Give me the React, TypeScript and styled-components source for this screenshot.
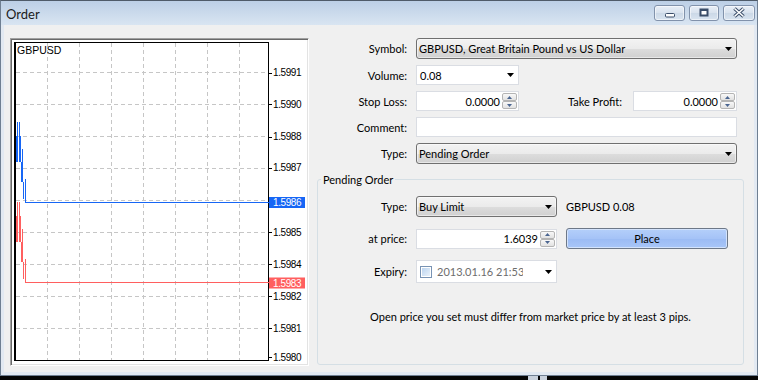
import styled, { createGlobalStyle } from 'styled-components';

const GlobalStyle = createGlobalStyle`
  html, body {
    margin: 0;
    padding: 0;
    background: #000;
  }
  body {
    font-family: Lato, "Liberation Sans", Arial, sans-serif;
    font-size: 11px;
    color: #000;
  }
  * { box-sizing: border-box; }
`;

const Screen = styled.div`
  width: 758px;
  height: 380px;
  background: #050505;
  display: flex;
  flex-direction: column;
  overflow: hidden;
`;

const Window = styled.div`
  height: 376px;
  flex: none;
  background: #e2e9f2;
  border: 1px solid #6f7f92;
  border-top-color: #4f5b69;
  display: flex;
  flex-direction: column;
`;

const TitleBar = styled.div`
  height: 24px;
  flex: none;
  display: flex;
  align-items: flex-start;
  background: linear-gradient(#bccfe6, #d9e5f2);
  padding: 0 2px 0 5px;
`;

const Title = styled.div`
  font-size: 13px;
  line-height: 16px;
  margin-top: 5px;
  color: #1b1b1b;
`;

const Caption = styled.div`
  display: flex;
  gap: 4px;
  margin-left: auto;
  margin-top: 4px;
`;

const CapButton = styled.div<{ $w: number }>`
  width: ${p => p.$w}px;
  height: 16px;
  border: 1px solid #8192ab;
  border-radius: 3px;
  background: linear-gradient(#e9eff7, #d8e2ee 50%, #cbd8e7 51%, #d9e4f0);
  box-shadow: inset 0 0 0 1px rgba(255, 255, 255, 0.55);
  display: flex;
  align-items: center;
  justify-content: center;
`;

const Client = styled.div`
  flex: 1;
  margin: 0 3px 3px;
  background: #f0f0f0;
  display: flex;
  padding: 13px 0 0 6px;
`;

const ChartFrame = styled.div`
  width: 299px;
  height: 328px;
  flex: none;
  border: 1px solid;
  border-color: #a0a0a0 #ffffff #ffffff #a0a0a0;
  box-shadow: inset 1px 1px 0 #696969, inset -1px -1px 0 #e3e3e3;
  background: #fff;
  padding: 1px;
`;

const ChartSvg = styled.svg`
  display: block;
  font-family: "Liberation Sans", Arial, sans-serif;
`;

const Side = styled.div`
  width: 427px;
  margin-left: 8px;
  flex: none;
  display: flex;
  flex-direction: column;
`;

const Form = styled.div`
  display: grid;
  grid-template-columns: 90px 321px;
  column-gap: 9px;
  row-gap: 6px;
  align-items: center;
`;

const Label = styled.label`
  text-align: right;
  white-space: nowrap;
  line-height: 15px;
`;

const Combo = styled.div<{ $w?: number }>`
  height: 21px;
  width: ${p => (p.$w ? `${p.$w}px` : '100%')};
  border: 1px solid #707070;
  border-radius: 3px;
  background: linear-gradient(#f3f3f3 0%, #ebebeb 50%, #dddddd 51%, #d0d0d0 100%);
  box-shadow: inset 0 0 0 1px rgba(255, 255, 255, 0.5);
  display: flex;
  align-items: center;
  padding: 0 4px 0 2px;
  white-space: nowrap;
`;

const Edit = styled.div<{ $w?: number; $h?: number }>`
  height: ${p => p.$h ?? 20}px;
  width: ${p => (p.$w ? `${p.$w}px` : '100%')};
  background: #fff;
  border: 1px solid #dadde3;
  display: flex;
  align-items: center;
  padding: 0 4px 0 3px;
  white-space: nowrap;
`;

const SpinEdit = styled(Edit)`
  padding-right: 0;
`;

const Value = styled.span`
  flex: 1;
  text-align: right;
`;

const Spin = styled.div`
  width: 15px;
  align-self: stretch;
  margin: 1px 1px 1px 2px;
  display: flex;
  flex-direction: column;
`;

const SpinBtn = styled.div`
  flex: 1;
  border: 1px solid #b4b4b4;
  border-radius: 2px;
  background: linear-gradient(#f8f8f8, #e2e2e2);
  display: flex;
  align-items: center;
  justify-content: center;
`;

const ArrowIcon = styled.svg`
  flex: none;
  margin-left: auto;
  display: block;
`;

const PairRow = styled.div`
  display: flex;
  align-items: center;
`;

const PairLabel = styled(Label)`
  flex: 1;
  padding-right: 11px;
`;

const Group = styled.fieldset`
  margin: 8px 0 0;
  padding: 9px 0 0;
  min-width: 0;
  height: 193px;
  border: 1px solid #d5dfe5;
  border-radius: 3px;
`;

const Legend = styled.legend`
  margin-left: 3px;
  padding: 0 2px;
  line-height: 15px;
`;

const PendGrid = styled.div`
  display: grid;
  grid-template-columns: 89px 141px 1fr;
  column-gap: 9px;
  row-gap: 11px;
  align-items: center;
`;

const Note = styled.span`
  white-space: nowrap;
`;

const PlaceButton = styled.div`
  width: 162px;
  height: 21px;
  border: 1px solid #6d7888;
  border-radius: 3px;
  background: linear-gradient(#b4cffa, #a5c3f7 50%, #9bbbf4 51%, #a8c6f8);
  box-shadow: inset 0 0 0 1px #d3e3fc;
  display: flex;
  align-items: center;
  justify-content: center;
`;

const Check = styled.span`
  width: 12px;
  height: 12px;
  flex: none;
  border: 1px solid #7893b4;
  box-shadow: inset 0 0 0 1px #fff;
  background: linear-gradient(135deg, #b7d1ee, #eef5fc);
`;

const DateText = styled.span`
  width: 86px;
  margin-left: 5px;
  overflow: hidden;
  color: #6d6d6d;
`;

const Message = styled.div`
  margin-top: 26px;
  text-align: center;
  line-height: 15px;
`;

const Desktop = styled.div`
  flex: 1;
  display: flex;
  gap: 2px;
  padding-left: 528px;
`;

const TrayBit = styled.div<{ $w: number }>`
  width: ${p => p.$w}px;
  background: #c9d1dc;
`;

const DropArrow = () => (
  <ArrowIcon width="7" height="4" viewBox="0 0 7 4">
    <polygon points="0,0 7,0 3.5,4" fill="#000" />
  </ArrowIcon>
);

const SpinButtons = () => (
  <Spin>
    <SpinBtn>
      <svg width="5" height="3" viewBox="0 0 5 3"><polygon points="0,3 5,3 2.5,0" fill="#4a6590" /></svg>
    </SpinBtn>
    <SpinBtn>
      <svg width="5" height="3" viewBox="0 0 5 3"><polygon points="0,0 5,0 2.5,3" fill="#4a6590" /></svg>
    </SpinBtn>
  </Spin>
);

const SpinField = ({ w, value }: { w: number; value: string }) => (
  <SpinEdit $w={w}>
    <Value>{value}</Value>
    <SpinButtons />
  </SpinEdit>
);

// chart data, in svg coordinates (panel origin)
const hGrid = [32, 64, 96, 128, 160, 192, 224, 256, 288];
const vGrid = [35, 67, 99, 131, 163, 195, 227];
const scale = [
  { p: '1.5991', y: 32.5 },
  { p: '1.5990', y: 64 },
  { p: '1.5988', y: 96.5 },
  { p: '1.5987', y: 127.5 },
  { p: '1.5985', y: 192 },
  { p: '1.5984', y: 224 },
  { p: '1.5982', y: 256 },
  { p: '1.5981', y: 288 },
  { p: '1.5980', y: 317 },
];

const barPath = (dy: number) =>
  [
    [5.5, 82, 122],
    [7.5, 82, 122],
    [4.5, 96, 122],
    [8.5, 96, 122],
    [9.5, 122, 142],
    [10.5, 109, 142],
    [11.5, 142, 159],
    [13.5, 139, 163],
  ]
    .map(([x, a, b]) => `M${x} ${a + dy}V${b + dy}`)
    .join('');

const Chart = () => (
  <ChartSvg width="295" height="324" viewBox="0 0 295 324">
    {hGrid.map(y => (
      <line key={`h${y}`} x1="4" x2="256" y1={y + 0.5} y2={y + 0.5} stroke="#c6c6c6" strokeDasharray="4 3" />
    ))}
    {vGrid.map(x => (
      <line key={`v${x}`} x1={x + 0.5} x2={x + 0.5} y1="3" y2="321" stroke="#c6c6c6" strokeDasharray="4 3" />
    ))}
    <rect x="2.5" y="2.5" width="254" height="318" fill="none" stroke="#000" />
    <line x1="3.5" x2="3.5" y1="3" y2="321" stroke="#000" />
    <text x="5" y="13.5" fontSize="10.5">GBPUSD</text>

    <path d={barPath(0)} stroke="#1666f5" fill="none" />
    <path d={barPath(80)} stroke="#ff5f5f" fill="none" />
    <line x1="13" x2="257" y1="162.5" y2="162.5" stroke="#1666f5" />
    <line x1="13" x2="257" y1="242.5" y2="242.5" stroke="#ff5f5f" />

    {scale.map(s => (
      <g key={s.p}>
        <line x1="257" x2="260" y1={Math.round(s.y) + 0.5} y2={Math.round(s.y) + 0.5} stroke="#000" />
        <text x="261" y={s.y + 3.8} fontSize="10" letterSpacing="-0.4">{s.p}</text>
      </g>
    ))}

    <rect x="257" y="157" width="36" height="11" fill="#1666f5" />
    <text x="261" y="166.3" fontSize="10" letterSpacing="-0.4" fill="#fff">1.5986</text>
    <rect x="257" y="237.5" width="36" height="11" fill="#ff5f5f" />
    <text x="261" y="246.8" fontSize="10" letterSpacing="-0.4" fill="#fff">1.5983</text>
  </ChartSvg>
);

export default function App() {
  return (
    <Screen>
      <GlobalStyle />
      <Window>
        <TitleBar>
          <Title>Order</Title>
          <Caption>
            <CapButton $w={31}>
              <svg width="14" height="14" viewBox="0 0 14 14">
                <rect x="2.5" y="7.5" width="9" height="3.5" rx="1" fill="#fff" stroke="#3a4d69" />
              </svg>
            </CapButton>
            <CapButton $w={30}>
              <svg width="14" height="14" viewBox="0 0 14 14">
                <rect x="2.5" y="2.5" width="9" height="8" fill="#3a4d69" />
                <rect x="4.5" y="5" width="5" height="3.5" fill="#fff" />
              </svg>
            </CapButton>
            <CapButton $w={32}>
              <svg width="14" height="14" viewBox="0 0 14 14">
                <path d="M2.5 2.5L11.5 10.5M11.5 2.5L2.5 10.5" stroke="#3a4d69" strokeWidth="3.6" />
                <path d="M2.5 2.5L11.5 10.5M11.5 2.5L2.5 10.5" stroke="#fff" strokeWidth="1.6" />
              </svg>
            </CapButton>
          </Caption>
        </TitleBar>

        <Client>
          <ChartFrame>
            <Chart />
          </ChartFrame>

          <Side>
            <Form>
              <Label>Symbol:</Label>
              <Combo>
                GBPUSD, Great Britain Pound vs US Dollar
                <DropArrow />
              </Combo>

              <Label>Volume:</Label>
              <Edit $w={103}>
                0.08
                <DropArrow />
              </Edit>

              <Label>Stop Loss:</Label>
              <PairRow>
                <SpinField w={103} value="0.0000" />
                <PairLabel>Take Profit:</PairLabel>
                <SpinField w={104} value="0.0000" />
              </PairRow>

              <Label>Comment:</Label>
              <Edit />

              <Label>Type:</Label>
              <Combo>
                Pending Order
                <DropArrow />
              </Combo>
            </Form>

            <Group>
              <Legend>Pending Order</Legend>
              <PendGrid>
                <Label>Type:</Label>
                <Combo $w={141}>
                  Buy Limit
                  <DropArrow />
                </Combo>
                <Note>GBPUSD 0.08</Note>

                <Label>at price:</Label>
                <SpinField w={141} value="1.6039" />
                <PlaceButton>Place</PlaceButton>

                <Label>Expiry:</Label>
                <Edit $w={141} $h={23}>
                  <Check />
                  <DateText>2013.01.16 21:53</DateText>
                  <DropArrow />
                </Edit>
                <span />
              </PendGrid>
              <Message>Open price you set must differ from market price by at least 3 pips.</Message>
            </Group>
          </Side>
        </Client>
      </Window>
      <Desktop>
        <TrayBit $w={10} />
        <TrayBit $w={7} />
      </Desktop>
    </Screen>
  );
}
